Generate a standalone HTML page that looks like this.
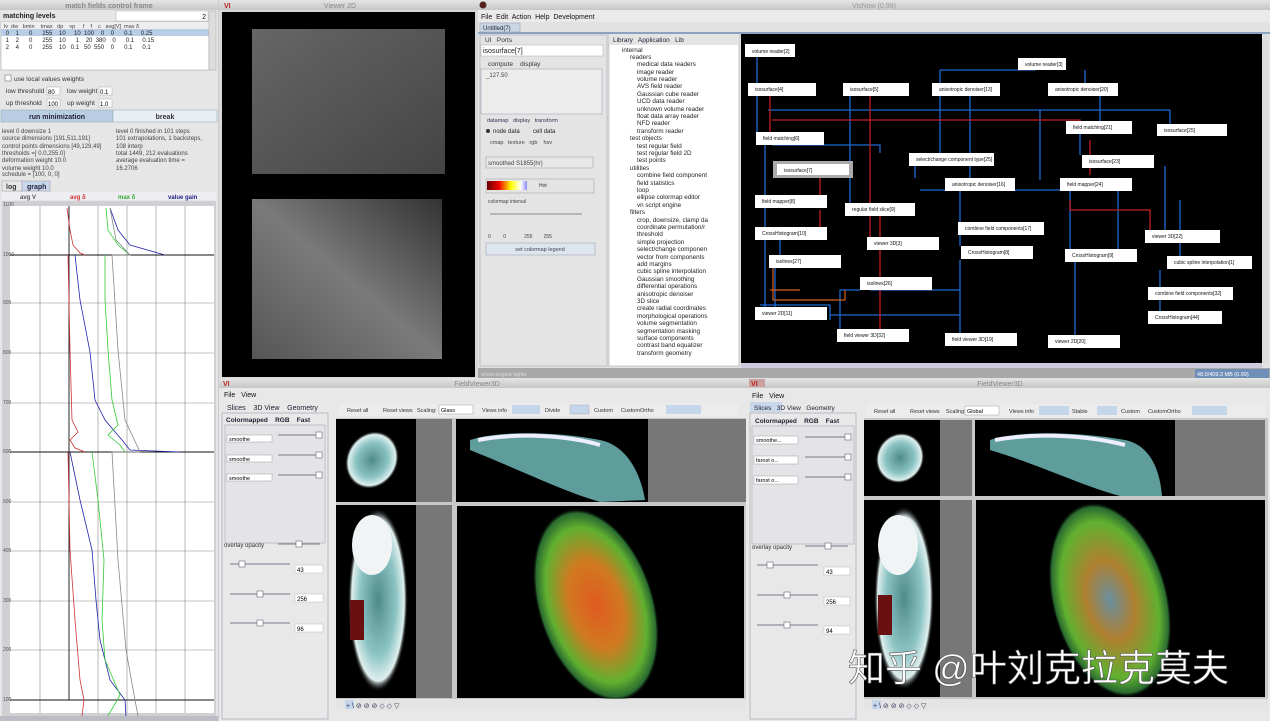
<!DOCTYPE html>
<html><head><meta charset="utf-8">
<style>
html,body{margin:0;padding:0;width:1270px;height:721px;overflow:hidden;background:#c9ccd2;}
svg{display:block}
text{font-family:"Liberation Sans",sans-serif;}
</style></head><body>
<svg width="1270" height="721" viewBox="0 0 1270 721" xmlns="http://www.w3.org/2000/svg">
<defs>
<linearGradient id="tb" x1="0" y1="0" x2="0" y2="1"><stop offset="0" stop-color="#e4e4e4"/><stop offset="1" stop-color="#c6c6c6"/></linearGradient>
<linearGradient id="hot" x1="0" y1="0" x2="1" y2="0"><stop offset="0" stop-color="#600"/><stop offset=".3" stop-color="#e00"/><stop offset=".6" stop-color="#ff0"/><stop offset=".85" stop-color="#fff"/><stop offset="1" stop-color="#88f"/></linearGradient>
<linearGradient id="g1" x1="0" y1="0" x2="1" y2="1"><stop offset="0" stop-color="#666"/><stop offset="1" stop-color="#444"/></linearGradient>
<linearGradient id="g2" x1="0" y1="1" x2="1" y2="0"><stop offset="0" stop-color="#555"/><stop offset=".5" stop-color="#7a7a7a"/><stop offset="1" stop-color="#333"/></linearGradient>
<radialGradient id="vol" cx=".5" cy=".5" r=".5"><stop offset="0" stop-color="#e05a20"/><stop offset=".45" stop-color="#d07a20"/><stop offset=".8" stop-color="#60b030"/><stop offset=".95" stop-color="#2a6a30"/><stop offset="1" stop-color="#000" stop-opacity="0"/></radialGradient>
<radialGradient id="vol2" cx=".5" cy=".5" r=".5"><stop offset="0" stop-color="#6a90a0"/><stop offset=".4" stop-color="#b08030"/><stop offset=".8" stop-color="#60b030"/><stop offset=".95" stop-color="#2a6a30"/><stop offset="1" stop-color="#000" stop-opacity="0"/></radialGradient>
<radialGradient id="foot" cx=".5" cy=".5" r=".5"><stop offset="0" stop-color="#4f8a8a"/><stop offset=".6" stop-color="#8cc4c4"/><stop offset=".88" stop-color="#dfeeee"/><stop offset="1" stop-color="#000" stop-opacity="0"/></radialGradient>
</defs>

<!-- ============ LEFT CONTROL FRAME ============ -->
<rect x="0" y="0" width="218" height="721" fill="#e6e6e6"/>
<rect x="0" y="0" width="218" height="10" fill="url(#tb)"/>
<text x="109" y="8" font-size="7" fill="#888" text-anchor="middle" font-weight="bold">match fields control frame</text>
<text x="3" y="18" font-size="7" font-weight="bold" fill="#222">matching levels</text>
<rect x="116" y="11" width="92" height="10" fill="#fff" stroke="#aaa" stroke-width=".5"/>
<text x="206" y="19" font-size="7" text-anchor="end">2</text>
<rect x="1" y="22" width="208" height="48" fill="#fff" stroke="#999" stroke-width=".5"/>
<rect x="1" y="22" width="208" height="7" fill="#eee"/>
<text x="4" y="28" font-size="5.5" fill="#444" xml:space="preserve">lv  dw   bmin    tmax   dp    vp     f    f    c   avg[V]  max δ</text>
<rect x="1" y="29" width="208" height="7" fill="#b8cde6"/>
<text x="4" y="35" font-size="6" fill="#222" xml:space="preserve"> 0    1      0      255    10     10  100    0    0      0.1     0.25</text>
<text x="4" y="42" font-size="6" fill="#222" xml:space="preserve"> 1    2      0      255    10      1    20  380    0      0.1     0.15</text>
<text x="4" y="49" font-size="6" fill="#222" xml:space="preserve"> 2    4      0      255    10   0.1   50  550    0      0.1      0.1</text>
<rect x="209" y="11" width="7" height="59" fill="#ddd" stroke="#aaa" stroke-width=".5"/>
<rect x="5" y="75" width="6" height="6" fill="#fff" stroke="#777" stroke-width=".6"/>
<text x="14" y="81" font-size="6.5" fill="#333">use local values weights</text>
<text x="6" y="93" font-size="6.5" fill="#333">low threshold</text>
<rect x="47" y="87" width="13" height="8" fill="#fff" stroke="#aaa" stroke-width=".5"/><text x="48" y="94" font-size="6">80</text>
<text x="67" y="93" font-size="6.5" fill="#333">low weight</text>
<rect x="99" y="87" width="13" height="8" fill="#fff" stroke="#aaa" stroke-width=".5"/><text x="100" y="94" font-size="6">0.1</text>
<text x="6" y="105" font-size="6.5" fill="#333">up threshold</text>
<rect x="47" y="99" width="13" height="8" fill="#fff" stroke="#aaa" stroke-width=".5"/><text x="48" y="106" font-size="6">100</text>
<text x="67" y="105" font-size="6.5" fill="#333">up weight</text>
<rect x="99" y="99" width="13" height="8" fill="#fff" stroke="#aaa" stroke-width=".5"/><text x="100" y="106" font-size="6">1.0</text>
<rect x="1" y="110" width="112" height="12" fill="#b9cee4" stroke="#8aa" stroke-width=".5"/>
<text x="57" y="119" font-size="7" font-weight="bold" text-anchor="middle" fill="#223">run minimization</text>
<rect x="113" y="110" width="104" height="12" fill="#e8eef4" stroke="#8aa" stroke-width=".5"/>
<text x="165" y="119" font-size="7" font-weight="bold" text-anchor="middle" fill="#333">break</text>
<g font-size="6" fill="#444">
<text x="2" y="133">level 0 downsize 1</text>
<text x="2" y="140">source dimensions [191,511,191]</text>
<text x="2" y="148">control points dimensions [49,129,49]</text>
<text x="2" y="155">thresholds =[ 0.0,255.0]</text>
<text x="2" y="162">deformation weight 10.0</text>
<text x="2" y="170">volume weight 10.0</text>
<text x="2" y="176">schedule = [100, 0, 0]</text>
<text x="116" y="133">level 0 finished in 101 steps</text>
<text x="116" y="140">101 extrapolations, 1 backsteps,</text>
<text x="116" y="148">108 interp</text>
<text x="116" y="155">total 1449, 212 evaluations</text>
<text x="116" y="162">average evaluation time =</text>
<text x="116" y="170">16.2706</text>
</g>
<rect x="2" y="181" width="20" height="10" fill="#e8e8e8" stroke="#99a" stroke-width=".5"/>
<text x="6" y="189" font-size="7" font-weight="bold" fill="#333">log</text>
<rect x="22" y="181" width="28" height="10" fill="#c8d8ea" stroke="#99a" stroke-width=".5"/>
<text x="27" y="189" font-size="7" font-weight="bold" fill="#224">graph</text>
<rect x="2" y="192" width="214" height="8" fill="#eeeef2"/>
<g font-size="6" font-weight="bold">
<text x="20" y="199" fill="#555">avg V</text>
<text x="70" y="199" fill="#c33">avg δ</text>
<text x="118" y="199" fill="#3a3">max δ</text>
<text x="168" y="199" fill="#228">value gain</text>
</g>
<rect x="2" y="201" width="214" height="516" fill="#d0d0d4"/>
<rect x="10" y="206" width="204" height="507" fill="#fff"/>
<g stroke="#888" stroke-width=".6">
<line x1="98" y1="206" x2="98" y2="713"/><line x1="127" y1="206" x2="127" y2="713"/><line x1="156" y1="206" x2="156" y2="713"/><line x1="185" y1="206" x2="185" y2="713"/><line x1="40" y1="206" x2="40" y2="713"/>
<line x1="10" y1="303" x2="214" y2="303"/><line x1="10" y1="353" x2="214" y2="353"/><line x1="10" y1="403" x2="214" y2="403"/><line x1="10" y1="502" x2="214" y2="502"/><line x1="10" y1="551" x2="214" y2="551"/><line x1="10" y1="601" x2="214" y2="601"/><line x1="10" y1="650" x2="214" y2="650"/>
</g>
<g stroke="#111" stroke-width=".9">
<line x1="69" y1="206" x2="69" y2="700"/>
<line x1="10" y1="255" x2="214" y2="255"/><line x1="10" y1="452" x2="214" y2="452"/><line x1="10" y1="700" x2="214" y2="700"/>
</g>
<g font-size="5" fill="#555"><text x="3" y="206">1100</text><text x="3" y="256">1000</text><text x="3" y="304">900</text><text x="3" y="354">800</text><text x="3" y="404">700</text><text x="3" y="453">600</text><text x="3" y="503">500</text><text x="3" y="552">400</text><text x="3" y="602">300</text><text x="3" y="651">200</text><text x="3" y="701">100</text></g>
<g fill="none" stroke-width=".8">
<polyline stroke="#c33" points="67,208 70,230 73,245 80,253 85,255"/>
<polyline stroke="#c33" points="68,255 70,350 72,420 78,432 70,440 75,448 85,452"/>
<polyline stroke="#c33" points="68,452 70,550 75,620 80,680 84,700 82,716"/>
<polyline stroke="#22a" points="110,208 118,230 130,245 165,255"/>
<polyline stroke="#22a" points="75,255 80,300 90,352 95,400 105,420 122,440 130,450 180,452"/>
<polyline stroke="#22a" points="70,452 80,500 92,550 96,600 100,640 110,680 125,700 126,716"/>
<polyline stroke="#3c3" points="106,208 108,230 118,245 130,255"/>
<polyline stroke="#3c3" points="105,255 105,300 108,350 112,400 118,425 108,435 120,445 125,452"/>
<polyline stroke="#3c3" points="92,452 98,500 104,560 102,620 105,660 120,695 108,716"/>
<polyline stroke="#888" points="110,208 116,240 130,255 112,255 118,350 125,420 140,452 112,452 118,560 126,650 135,700 138,716"/>
</g>
<rect x="0" y="716" width="218" height="5" fill="#bcbcc4"/>

<!-- ============ VIEWER 2D ============ -->
<rect x="219" y="0" width="259" height="378" fill="#d8d8d8"/>
<rect x="219" y="0" width="259" height="10" fill="url(#tb)"/>
<text x="224" y="8" font-size="7" fill="#b22" font-weight="bold">VI</text>
<text x="340" y="8" font-size="7" fill="#888" text-anchor="middle">Viewer 2D</text>
<rect x="222" y="12" width="253" height="365" fill="#000"/>
<rect x="252" y="29" width="193" height="145" fill="url(#g1)"/>
<rect x="252" y="199" width="190" height="160" fill="url(#g2)"/>

<!-- ============ VISNOW ============ -->
<rect x="478" y="0" width="792" height="380" fill="#e2e2e2"/>
<rect x="478" y="0" width="792" height="10" fill="url(#tb)"/>
<circle cx="483" cy="5" r="3.5" fill="#522"/>
<text x="874" y="8" font-size="7" fill="#999" text-anchor="middle">VisNow (0.99)</text>
<rect x="478" y="10" width="792" height="12" fill="#eaeaea"/>
<text x="481" y="19" font-size="7" fill="#111" xml:space="preserve">File  Edit  Action  Help  Development</text>
<rect x="480" y="23" width="40" height="9" fill="#c8d6e6" stroke="#99a" stroke-width=".5"/>
<text x="483" y="30" font-size="6" fill="#223">Untitled(7)</text>
<rect x="478" y="32" width="792" height="2" fill="#8aa3c0"/>
<rect x="480" y="35" width="127" height="331" fill="#e4e4e4" stroke="#99a" stroke-width=".5"/>
<text x="485" y="42" font-size="6.5" fill="#333" xml:space="preserve">UI   Ports</text>
<rect x="481" y="45" width="122" height="11" fill="#fff" stroke="#aaa" stroke-width=".5"/>
<text x="483" y="53" font-size="7" fill="#222">isosurface[7]</text>
<text x="488" y="66" font-size="6.5" fill="#333" xml:space="preserve">compute    display</text>
<rect x="481" y="69" width="121" height="45" fill="#ececec" stroke="#99a" stroke-width=".5"/>
<text x="486" y="77" font-size="6" fill="#444">_127.50</text>
<text x="487" y="122" font-size="5.5" fill="#335" xml:space="preserve">datamap   display   transform</text>
<circle cx="488" cy="131" r="2" fill="#333"/>
<text x="493" y="133" font-size="6" fill="#222" xml:space="preserve">node data        cell data</text>
<text x="490" y="144" font-size="5.5" fill="#444" xml:space="preserve">cmap   texture   rgb    hsv</text>
<rect x="486" y="157" width="107" height="11" fill="#e8e8e8" stroke="#999" stroke-width=".5"/>
<text x="488" y="165" font-size="6" fill="#444">smoothed S1855(hr)</text>
<rect x="487" y="181" width="40" height="9" fill="url(#hot)"/>
<text x="539" y="187" font-size="5" fill="#333">Hot</text>
<rect x="486" y="179" width="108" height="14" fill="none" stroke="#999" stroke-width=".5"/>
<text x="488" y="203" font-size="5" fill="#444">colormap interval</text>
<line x1="490" y1="214" x2="582" y2="214" stroke="#888"/>
<text x="488" y="238" font-size="5" fill="#444" xml:space="preserve">0         0             255        255</text>
<rect x="486" y="243" width="109" height="12" fill="#dde5ef" stroke="#99a" stroke-width=".5"/>
<text x="540" y="251" font-size="5.5" fill="#445" text-anchor="middle">set colormap legend</text>
<rect x="609" y="34" width="130" height="332" fill="#fff" stroke="#99a" stroke-width=".5"/>
<rect x="609" y="34" width="130" height="11" fill="#e4e4e4"/>
<text x="613" y="42" font-size="6.5" fill="#223" xml:space="preserve">Library   Application   Lib</text>
<g font-size="6.3" fill="#222">
<text x="622" y="52">internal</text><text x="630" y="59">readers</text>
<text x="637" y="66">medical data readers</text><text x="637" y="74">image reader</text><text x="637" y="81">volume reader</text><text x="637" y="88">AVS field reader</text><text x="637" y="96">Gaussian cube reader</text><text x="637" y="103">UCD data reader</text><text x="637" y="111">unknown volume reader</text><text x="637" y="118">float data array reader</text><text x="637" y="125">NFD reader</text><text x="637" y="133">transform reader</text>
<text x="630" y="140">test objects</text><text x="637" y="148">test regular field</text><text x="637" y="155">test regular field 2D</text><text x="637" y="162">test points</text>
<text x="630" y="170">utilities</text><text x="637" y="177">combine field component</text><text x="637" y="185">field statistics</text><text x="637" y="192">loop</text><text x="637" y="199">ellipse colormap editor</text><text x="637" y="207">vn script engine</text>
<text x="630" y="214">filters</text><text x="637" y="222">crop, downsize, clamp da</text><text x="637" y="229">coordinate permutation/r</text><text x="637" y="236">threshold</text><text x="637" y="244">simple projection</text><text x="637" y="251">select/change componen</text><text x="637" y="259">vector from components</text><text x="637" y="266">add margins</text><text x="637" y="273">cubic spline interpolation</text><text x="637" y="281">Gaussian smoothing</text><text x="637" y="288">differential operations</text><text x="637" y="296">anisotropic denoiser</text><text x="637" y="303">3D slice</text><text x="637" y="310">create radial coordinates</text><text x="637" y="318">morphological operations</text><text x="637" y="325">volume segmentation</text><text x="637" y="333">segmentation masking</text><text x="637" y="340">surface components</text><text x="637" y="347">contrast band equalizer</text><text x="637" y="355">transform geometry</text>
</g>
<rect x="741" y="34" width="521" height="329" fill="#000"/>
<g stroke="#1e6ad0" stroke-width="1.3" fill="none">
<path d="M757,57V83 M757,96V132 M765,145V195 M765,208V227 M765,240V307 M772,145H880V153 M850,96V203 M940,70H1035V58 M940,70V83 M940,96V153 M915,166V178 M970,96V180 M960,191V222 M960,235V246 M960,260V333 M1100,96V121 M1085,70V83 M1080,134V155 M1170,110V124 M1070,191V249 M1075,260V335 M1165,166V230 M1180,200V256 M1160,270V287 M1160,300V311 M768,110H1170 M780,240V255 M775,268V307 M830,315H960 M870,290H960 M840,330V290H860 M1040,110V180 M760,305H830V320 M1118,191V260 M920,190H1060"/>
</g>
<g stroke="#c42020" stroke-width="1.3" fill="none">
<path d="M770,96V132 M870,96V237 M772,120H1080V121 M820,176V195 M820,210V240 M1070,200V210H1150V230 M1090,140V175 M880,210V330"/>
</g>
<path d="M773,268V300H845V290 M770,290H800" stroke="#d06020" stroke-width="1.2" fill="none"/>
<g font-size="5" fill="#111">
<rect x="745" y="44" width="50" height="13" fill="#fff"/><text x="752" y="53">volume reader[2]</text>
<rect x="1018" y="58" width="48" height="12" fill="#fff"/><text x="1025" y="66">volume reader[3]</text>
<rect x="748" y="83" width="68" height="13" fill="#fff"/><text x="755" y="91">isosurface[4]</text>
<rect x="843" y="83" width="66" height="13" fill="#fff"/><text x="850" y="91">isosurface[5]</text>
<rect x="932" y="83" width="68" height="13" fill="#fff"/><text x="939" y="91">anisotropic denoiser[13]</text>
<rect x="1048" y="83" width="70" height="13" fill="#fff"/><text x="1055" y="91">anisotropic denoiser[20]</text>
<rect x="1066" y="121" width="66" height="13" fill="#fff"/><text x="1073" y="129">field matching[21]</text>
<rect x="1157" y="124" width="70" height="12" fill="#fff"/><text x="1164" y="132">isosurface[25]</text>
<rect x="756" y="132" width="68" height="13" fill="#fff"/><text x="763" y="140">field matching[6]</text>
<rect x="909" y="153" width="85" height="13" fill="#fff"/><text x="916" y="161">select/change component type[25]</text>
<rect x="1082" y="155" width="72" height="13" fill="#fff"/><text x="1089" y="163">isosurface[23]</text>
<rect x="773" y="161" width="80" height="17" fill="#aaa"/><rect x="777" y="164" width="72" height="11" fill="#fff"/><text x="784" y="172">isosurface[7]</text>
<rect x="945" y="178" width="70" height="13" fill="#fff"/><text x="952" y="186">anisotropic denoiser[16]</text>
<rect x="1060" y="178" width="72" height="13" fill="#fff"/><text x="1067" y="186">field mapper[24]</text>
<rect x="755" y="195" width="72" height="13" fill="#fff"/><text x="762" y="203">field mapper[8]</text>
<rect x="845" y="203" width="70" height="13" fill="#fff"/><text x="852" y="211">regular field slice[9]</text>
<rect x="958" y="222" width="86" height="13" fill="#fff"/><text x="965" y="230">combine field components[17]</text>
<rect x="755" y="227" width="72" height="13" fill="#fff"/><text x="762" y="235">CrossHistogram[10]</text>
<rect x="1145" y="230" width="75" height="13" fill="#fff"/><text x="1152" y="238">viewer 3D[22]</text>
<rect x="867" y="237" width="72" height="13" fill="#fff"/><text x="874" y="245">viewer 3D[3]</text>
<rect x="961" y="246" width="72" height="13" fill="#fff"/><text x="968" y="254">CrossHistogram[8]</text>
<rect x="1065" y="249" width="72" height="13" fill="#fff"/><text x="1072" y="257">CrossHistogram[9]</text>
<rect x="769" y="255" width="72" height="13" fill="#fff"/><text x="776" y="263">isolines[27]</text>
<rect x="1167" y="256" width="85" height="13" fill="#fff"/><text x="1174" y="264">cubic spline interpolation[1]</text>
<rect x="860" y="277" width="72" height="13" fill="#fff"/><text x="867" y="285">isolines[26]</text>
<rect x="1148" y="287" width="85" height="13" fill="#fff"/><text x="1155" y="295">combine field components[32]</text>
<rect x="755" y="307" width="72" height="13" fill="#fff"/><text x="762" y="315">viewer 2D[11]</text>
<rect x="1148" y="311" width="74" height="13" fill="#fff"/><text x="1155" y="319">CrossHistogram[44]</text>
<rect x="837" y="329" width="72" height="13" fill="#fff"/><text x="844" y="337">field viewer 3D[32]</text>
<rect x="945" y="333" width="72" height="13" fill="#fff"/><text x="952" y="341">field viewer 3D[19]</text>
<rect x="1048" y="335" width="72" height="13" fill="#fff"/><text x="1055" y="343">viewer 2D[20]</text>
</g>
<rect x="741" y="363" width="521" height="5" fill="#ccd"/>
<rect x="1262" y="34" width="6" height="329" fill="#ddd"/>
<rect x="478" y="368" width="792" height="12" fill="#a9a9a9"/>
<text x="481" y="376" font-size="5.5" fill="#ddd">show engine lights</text>
<rect x="1195" y="369" width="74" height="9" fill="#6f8fb8"/>
<text x="1197" y="376" font-size="5.5" fill="#fff">48.0/409.3 MB (0.99)</text>

<!-- ============ FIELDVIEWER 1 ============ -->
<g>
<rect x="219" y="378" width="529" height="343" fill="#e8e8e8"/>
<rect x="219" y="378" width="529" height="10" fill="url(#tb)"/>
<text x="223" y="386" font-size="7" fill="#b22" font-weight="bold">VI</text>
<text x="477" y="386" font-size="7" fill="#888" text-anchor="middle">FieldViewer3D</text>
<text x="224" y="397" font-size="7" fill="#111" xml:space="preserve">File   View</text>
<text x="227" y="410" font-size="7" fill="#223" xml:space="preserve">Slices    3D View    Geometry</text>
<rect x="222" y="413" width="106" height="306" fill="#e8e8e8" stroke="#99a" stroke-width=".6"/>
<text x="226" y="422" font-size="6.5" fill="#223" font-weight="bold" xml:space="preserve">Colormapped    RGB    Fast</text>
<rect x="225" y="425" width="100" height="118" fill="#e4e4e8" stroke="#99a" stroke-width=".5"/>
<rect x="227" y="435" width="45" height="7" fill="#fff" stroke="#888" stroke-width=".4"/><text x="229" y="441" font-size="5.5">smoothe</text>
<rect x="227" y="455" width="45" height="7" fill="#fff" stroke="#888" stroke-width=".4"/><text x="229" y="461" font-size="5.5">smoothe</text>
<rect x="227" y="474" width="45" height="7" fill="#fff" stroke="#888" stroke-width=".4"/><text x="229" y="480" font-size="5.5">smoothe</text>
<g stroke="#778" stroke-width="1"><line x1="278" y1="435" x2="322" y2="435"/><line x1="278" y1="455" x2="322" y2="455"/><line x1="278" y1="475" x2="322" y2="475"/><line x1="278" y1="544" x2="320" y2="544"/><line x1="230" y1="564" x2="290" y2="564"/><line x1="230" y1="594" x2="290" y2="594"/><line x1="230" y1="623" x2="290" y2="623"/></g>
<g fill="#fff" stroke="#667" stroke-width=".6"><rect x="316" y="432" width="6" height="6"/><rect x="316" y="452" width="6" height="6"/><rect x="316" y="472" width="6" height="6"/><rect x="296" y="541" width="6" height="6"/><rect x="239" y="561" width="6" height="6"/><rect x="257" y="591" width="6" height="6"/><rect x="257" y="620" width="6" height="6"/></g>
<text x="224" y="547" font-size="6" fill="#333">overlay opacity</text>
<rect x="295" y="565" width="28" height="8" fill="#fff" stroke="#aaa" stroke-width=".4"/><text x="297" y="572" font-size="6">43</text>
<rect x="295" y="594" width="28" height="8" fill="#fff" stroke="#aaa" stroke-width=".4"/><text x="297" y="601" font-size="6">256</text>
<rect x="295" y="624" width="28" height="8" fill="#fff" stroke="#aaa" stroke-width=".4"/><text x="297" y="631" font-size="6">96</text>
<rect x="339" y="403" width="400" height="13" fill="#ececec"/>
<g font-size="5.5" fill="#333"><text x="347" y="412">Reset all</text><text x="383" y="412">Reset views</text><text x="417" y="412">Scaling:</text><text x="482" y="412">Views info</text><text x="545" y="412">Divide</text><text x="572" y="412">Ortho</text><text x="594" y="412">Custom</text><text x="621" y="412">CustomOrtho</text></g>
<rect x="439" y="405" width="34" height="9" fill="#fff" stroke="#888" stroke-width=".4"/><text x="441" y="412" font-size="5.5">Glass</text>
<rect x="512" y="405" width="28" height="9" fill="#c5d6ea"/>
<rect x="570" y="405" width="19" height="9" fill="#c5d6ea" stroke="#99a" stroke-width=".4"/>
<rect x="666" y="405" width="35" height="9" fill="#c5d6ea"/>
<rect x="336" y="418" width="410" height="282" fill="#c8c8c8"/>
<rect x="336" y="419" width="116" height="83" fill="#777"/><rect x="336" y="419" width="80" height="83" fill="#000"/>
<rect x="456" y="419" width="290" height="83" fill="#777"/><rect x="456" y="419" width="192" height="83" fill="#000"/>
<rect x="336" y="505" width="116" height="193" fill="#777"/><rect x="336" y="505" width="80" height="193" fill="#000"/>
<rect x="457" y="506" width="287" height="192" fill="#000"/>
<ellipse cx="372" cy="460" rx="26" ry="30" fill="url(#foot)" transform="rotate(30 372 460)"/>
<path d="M470,440 C500,430 560,432 600,440 C625,445 640,470 645,500 L600,502 C560,490 520,470 470,450Z" fill="#5f9c9c"/>
<path d="M478,440 C520,432 570,436 600,445" stroke="#eef" stroke-width="4" fill="none"/>
<ellipse cx="378" cy="600" rx="30" ry="92" fill="url(#foot)"/>
<ellipse cx="372" cy="545" rx="20" ry="30" fill="#f0f4f4"/>
<rect x="350" y="600" width="14" height="40" fill="#6a1010"/>
<ellipse cx="596" cy="605" rx="58" ry="100" fill="url(#vol)" transform="rotate(-18 596 605)"/>
<rect x="336" y="699" width="410" height="12" fill="#e4e4e4"/>
<rect x="345" y="700" width="9" height="9" fill="#c5d6ea"/>
<text x="346" y="708" font-size="7" fill="#335" xml:space="preserve">+ \ ⊘ ⊘ ⊘ ◇ ◇ ▽</text>
</g>

<!-- ============ FIELDVIEWER 2 ============ -->
<g>
<rect x="747" y="378" width="523" height="343" fill="#e8e8e8"/>
<rect x="747" y="378" width="523" height="10" fill="url(#tb)"/>
<rect x="749" y="379" width="16" height="8" fill="#c8a0a0"/>
<text x="751" y="386" font-size="7" fill="#b22" font-weight="bold">VI</text>
<text x="1000" y="386" font-size="7" fill="#888" text-anchor="middle">FieldViewer3D</text>
<text x="752" y="398" font-size="7" fill="#111" xml:space="preserve">File   View</text>
<rect x="750" y="402" width="32" height="10" fill="#c8d8ea"/>
<text x="754" y="410" font-size="6.5" fill="#223" xml:space="preserve">Slices   3D View   Geometry</text>
<rect x="750" y="413" width="106" height="306" fill="#e8e8e8" stroke="#99a" stroke-width=".6"/>
<text x="755" y="423" font-size="6.5" fill="#223" font-weight="bold" xml:space="preserve">Colormapped    RGB    Fast</text>
<rect x="752" y="426" width="102" height="118" fill="#e4e4e8" stroke="#99a" stroke-width=".5"/>
<rect x="754" y="436" width="44" height="8" fill="#fff" stroke="#888" stroke-width=".4"/><text x="756" y="442" font-size="5.5">smoothe...</text>
<rect x="754" y="456" width="44" height="8" fill="#fff" stroke="#888" stroke-width=".4"/><text x="756" y="462" font-size="5.5">farost o...</text>
<rect x="754" y="476" width="44" height="8" fill="#fff" stroke="#888" stroke-width=".4"/><text x="756" y="482" font-size="5.5">farost o...</text>
<g stroke="#778" stroke-width="1"><line x1="805" y1="437" x2="850" y2="437"/><line x1="805" y1="457" x2="850" y2="457"/><line x1="805" y1="477" x2="850" y2="477"/><line x1="805" y1="546" x2="848" y2="546"/><line x1="757" y1="565" x2="818" y2="565"/><line x1="757" y1="595" x2="818" y2="595"/><line x1="757" y1="625" x2="818" y2="625"/></g>
<g fill="#fff" stroke="#667" stroke-width=".6"><rect x="845" y="434" width="6" height="6"/><rect x="845" y="454" width="6" height="6"/><rect x="845" y="474" width="6" height="6"/><rect x="825" y="543" width="6" height="6"/><rect x="767" y="562" width="6" height="6"/><rect x="784" y="592" width="6" height="6"/><rect x="784" y="622" width="6" height="6"/></g>
<text x="752" y="549" font-size="6" fill="#333">overlay opacity</text>
<rect x="824" y="567" width="26" height="8" fill="#fff" stroke="#aaa" stroke-width=".4"/><text x="826" y="574" font-size="6">43</text>
<rect x="824" y="597" width="26" height="8" fill="#fff" stroke="#aaa" stroke-width=".4"/><text x="826" y="604" font-size="6">256</text>
<rect x="824" y="626" width="26" height="8" fill="#fff" stroke="#aaa" stroke-width=".4"/><text x="826" y="633" font-size="6">94</text>
<rect x="866" y="404" width="400" height="13" fill="#ececec"/>
<g font-size="5.5" fill="#333"><text x="874" y="413">Reset all</text><text x="910" y="413">Reset views</text><text x="946" y="413">Scaling:</text><text x="1009" y="413">Views info</text><text x="1072" y="413">Stable</text><text x="1099" y="413">Ortho</text><text x="1121" y="413">Custom</text><text x="1148" y="413">CustomOrtho</text></g>
<rect x="965" y="406" width="34" height="9" fill="#fff" stroke="#888" stroke-width=".4"/><text x="967" y="413" font-size="5.5">Global</text>
<rect x="1039" y="406" width="30" height="9" fill="#c5d6ea"/>
<rect x="1097" y="406" width="20" height="9" fill="#c5d6ea"/>
<rect x="1192" y="406" width="35" height="9" fill="#c5d6ea"/>
<rect x="864" y="418" width="404" height="282" fill="#c8c8c8"/>
<rect x="864" y="420" width="108" height="76" fill="#777"/><rect x="864" y="420" width="76" height="76" fill="#000"/>
<rect x="975" y="420" width="290" height="76" fill="#777"/><rect x="975" y="420" width="200" height="76" fill="#000"/>
<rect x="864" y="500" width="108" height="197" fill="#777"/><rect x="864" y="500" width="76" height="197" fill="#000"/>
<rect x="976" y="500" width="289" height="197" fill="#000"/>
<ellipse cx="900" cy="458" rx="24" ry="26" fill="url(#foot)" transform="rotate(30 900 458)"/>
<path d="M990,440 C1020,430 1080,432 1125,440 C1150,445 1160,470 1162,496 L1120,496 C1080,485 1040,465 990,450Z" fill="#5f9c9c"/>
<path d="M995,440 C1040,432 1090,436 1125,445" stroke="#eef" stroke-width="4" fill="none"/>
<ellipse cx="904" cy="598" rx="30" ry="92" fill="url(#foot)"/>
<ellipse cx="898" cy="545" rx="20" ry="30" fill="#f0f4f4"/>
<rect x="878" y="595" width="14" height="40" fill="#6a1010"/>
<ellipse cx="1110" cy="600" rx="58" ry="100" fill="url(#vol2)" transform="rotate(-15 1110 600)"/>
<rect x="864" y="699" width="404" height="12" fill="#e4e4e4"/>
<rect x="872" y="700" width="9" height="9" fill="#c5d6ea"/>
<text x="873" y="708" font-size="7" fill="#335" xml:space="preserve">+ \ ⊘ ⊘ ⊘ ◇ ◇ ▽</text>
</g>

<text x="848" y="681" font-size="37" fill="#fff" stroke="#555" stroke-width=".6" font-family="'Liberation Sans','Noto Sans CJK SC',sans-serif">知乎 @叶刘克拉克莫夫</text>
</svg>
</body></html>
